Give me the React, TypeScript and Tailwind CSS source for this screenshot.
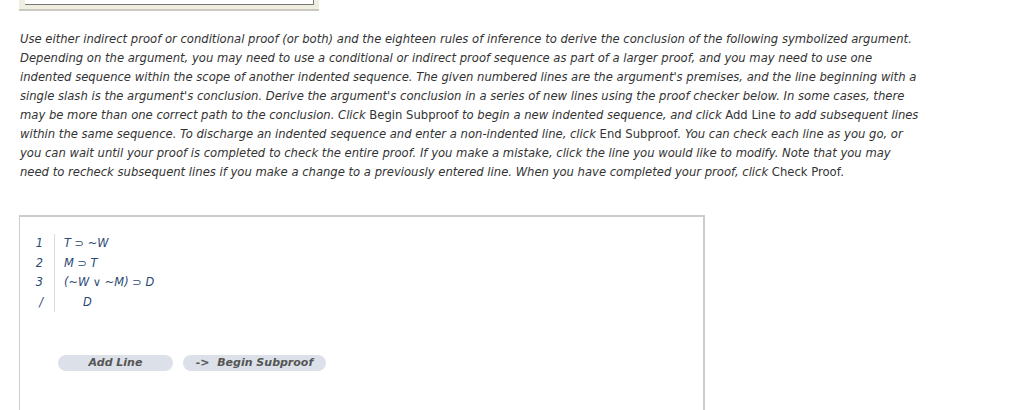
import React from 'react'

const font = { fontFamily: '"DejaVu Sans", Verdana, sans-serif' }

const N = ({ children }: { children: React.ReactNode }) => <span className="not-italic">{children}</span>

const lines: React.ReactNode[] = [
  <>Use either indirect proof or conditional proof (or both) and the eighteen rules of inference to derive the conclusion of the following symbolized argument.</>,
  <>Depending on the argument, you may need to use a conditional or indirect proof sequence as part of a larger proof, and you may need to use one</>,
  <>indented sequence within the scope of another indented sequence. The given numbered lines are the argument's premises, and the line beginning with a</>,
  <>single slash is the argument's conclusion. Derive the argument's conclusion in a series of new lines using the proof checker below. In some cases, there</>,
  <>may be more than one correct path to the conclusion. Click <N>Begin Subproof</N> to begin a new indented sequence, and click <N>Add Line</N> to add subsequent lines</>,
  <>within the same sequence. To discharge an indented sequence and enter a non-indented line, click <N>End Subproof</N>. You can check each line as you go, or</>,
  <>you can wait until your proof is completed to check the entire proof. If you make a mistake, click the line you would like to modify. Note that you may</>,
  <>need to recheck subsequent lines if you make a change to a previously entered line. When you have completed your proof, click <N>Check Proof</N>.</>,
]

const rows = [
  { n: '1', f: 'T ⊃ ~W', indent: false },
  { n: '2', f: 'M ⊃ T', indent: false },
  { n: '3', f: '(~W ∨ ~M) ⊃ D', indent: false },
  { n: '/', f: 'D', indent: true },
]

export default function App() {
  return (
    <div className="w-[1024px] h-[410px] bg-white overflow-hidden" style={font}>
      <div className="ml-[19px] w-[300px] h-[11px] bg-[#efeee0] border-b-2 border-[#c8c8c0] relative">
        <div className="ml-[6px] w-[289px] h-[5px] bg-white border-b border-r border-[#777]" />
      </div>

      <div className="mt-[19px] ml-[20px] italic text-[11.6px] leading-[19px] text-[#333] whitespace-nowrap">
        {lines.map((l, i) => (
          <div key={i}>{l}</div>
        ))}
      </div>

      <div className="mt-[33px] ml-[19px] w-[686px] h-[300px] border-t-2 border-l border-r-2 border-[#cccccc] pt-[17px]">
        <div className="flex flex-col text-[11.4px] leading-[19.5px] italic text-[#2a4a73]">
          {rows.map((r) => (
            <div key={r.n} className="flex">
              <div className="w-[25px] text-right pr-[2px]">{r.n}</div>
              <div className="ml-[9px] border-l border-[#dcdcdc] pl-[9px]">
                <span className={r.indent ? 'ml-[19px]' : ''}>{r.f}</span>
              </div>
            </div>
          ))}
        </div>
        <div className="flex gap-[10px] ml-[38px] mt-[43px]">
          <button className="w-[115px] h-[16px] rounded-full bg-[#dce1e9] text-[#555] text-[11px] font-bold italic leading-[16px]">
            Add Line
          </button>
          <button className="w-[143px] h-[16px] rounded-full bg-[#dce1e9] text-[#555] text-[11px] font-bold italic leading-[16px] whitespace-pre">
            {'->  Begin Subproof'}
          </button>
        </div>
      </div>
    </div>
  )
}
